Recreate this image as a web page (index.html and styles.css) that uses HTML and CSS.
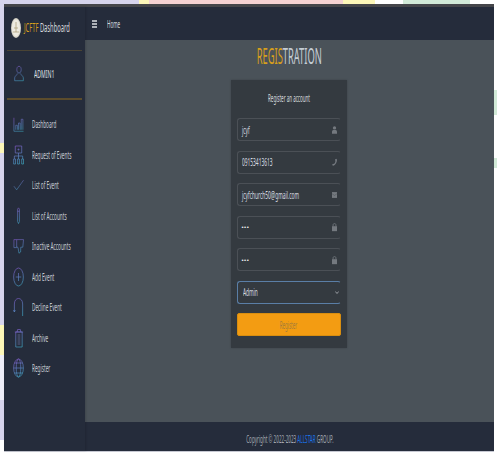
FILE: index.html
```html
<!DOCTYPE html>
<html lang="en">
<head>
<meta charset="utf-8">
<title>JCFTF Dashboard</title>
<link rel="stylesheet" href="styles.css">
</head>
<body>
<svg class="defs" aria-hidden="true"><defs><linearGradient id="g" gradientUnits="userSpaceOnUse" x1="0" y1="0" x2="12" y2="20"><stop offset="0" stop-color="#8a4fc8"/><stop offset="1" stop-color="#35b0c0"/></linearGradient></defs></svg>
<div class="app">
  <div class="strip"></div>
  <div class="frame">
    <aside class="sidebar">
      <div class="brand">
        <svg class="logo" viewBox="0 0 10 20"><ellipse cx="5" cy="10" rx="5" ry="10" fill="#d8d5c8"/><ellipse cx="5" cy="10" rx="4" ry="8.500" fill="#eeebe0"/><path d="M5 4v10M2 14h6M3 10h4" stroke="#a89a70" fill="none" stroke-width=".7"/></svg>
        <span class="brand-text"><span class="gold">JCFTF</span> Dashboard</span>
      </div>
      <hr class="rule">
      <div class="user">
        <svg class="icon user-icon" viewBox="0 0 12 20" preserveAspectRatio="none"><path d="M6 1.500c-2 0-2.600 2-2.600 4s.8 4 2.600 4 2.600-2 2.600-4-.6-4-2.600-4zM4 10c-.3 2-3 3-3.200 5v3.500h10.400V15c-.2-2-2.900-3-3.200-5"/></svg>
        <span class="user-name">ADMIN1</span>
      </div>
      <hr class="rule rule-strong">
      <nav class="menu">
        <a class="item"><svg class="icon icon-15" viewBox="0 0 12 20" preserveAspectRatio="none"><path d="M1 1v18h10.500M3 17v-6h1.800v6M6 17V8h1.800v9M9 17V3h1.800v14"/></svg><span>Dashboard</span></a>
        <a class="item"><svg class="icon" viewBox="0 0 12 20" preserveAspectRatio="none"><path d="M2.500 1h7v7h-7zM6 8v3M1.500 11h9M1.500 11v3M6 11v3M10.500 11v3M.7 14h2v5h-2zM5 14h2v5H5zM9.500 14h2v5h-2z"/><path d="M5.500 4h1v1h-1z"/></svg><span>Request of Events</span></a>
        <a class="item"><svg class="icon icon-12" viewBox="0 0 12 20" preserveAspectRatio="none"><path d="M1 12l3 6L11.500 2"/></svg><span>List of Event</span></a>
        <a class="item"><svg class="icon icon-17" viewBox="0 0 12 20" preserveAspectRatio="none"><path d="M5 2.500l1-1.500 1 1.500V17l-1 2.500L5 17zM5 5h2"/></svg><span>List of Accounts</span></a>
        <a class="item"><svg class="icon icon-16" viewBox="0 0 12 20" preserveAspectRatio="none"><path d="M1 2h3v10H1zM4 2h7.500l-.8 9.500H8.500l-.2 6-1.800 1.500-1-7-1.500-1"/></svg><span>Inactive Accounts</span></a>
        <a class="item"><svg class="icon" viewBox="0 0 12 20" preserveAspectRatio="none"><ellipse cx="6" cy="10" rx="5.300" ry="9"/><path d="M6 6v8M3 10h6"/></svg><span>Add Event</span></a>
        <a class="item"><svg class="icon" viewBox="0 0 12 20" preserveAspectRatio="none"><path d="M1.500 15V7c0-3.500 2-5.500 4.500-5.500S10.500 3.500 10.500 7v12M.5 13l1 2 1-2"/></svg><span>Decline Event</span></a>
        <a class="item"><svg class="icon" viewBox="0 0 12 20" preserveAspectRatio="none"><path d="M3 4h7v15H3zM2 4h9M4.500 4l.5-2.500h3L8.500 4"/><path class="fill" d="M5 6h3v11H5z"/></svg><span>Archive</span></a>
        <a class="item"><svg class="icon" viewBox="0 0 12 20" preserveAspectRatio="none"><ellipse cx="6" cy="10" rx="5.300" ry="9"/><ellipse cx="6" cy="10" rx="2.500" ry="9"/><path d="M.7 10h10.600M1.500 5h9M1.500 15h9"/></svg><span>Register</span></a>
      </nav>
    </aside>
    <div class="content">
      <header class="topbar">
        <span class="burger"><i></i><i></i><i></i></span>
        <span class="crumb">Home</span>
      </header>
      <main class="main">
        <h1 class="title"><span class="gold">REGIS</span>TRATION</h1>
        <form class="card">
          <p class="card-title">Register an account</p>
          <div class="field"><span class="value">jcyf</span>
            <svg class="field-icon" viewBox="0 0 6 9"><circle cx="3" cy="2" r="2"/><path d="M0 9V6.500C0 5 1 4.500 3 4.500S6 5 6 6.500V9z"/></svg></div>
          <div class="field"><span class="value">09153413613</span>
            <svg class="field-icon" viewBox="0 0 6 9"><path d="M5.500.5L6 2C6 5 4 8 1.500 9L0 8l1.200-1.500L2.300 7C3.500 6 4.200 4.300 4 3L3.500 1.500z"/></svg></div>
          <div class="field"><span class="value">jcyfchurch50@gmail.com</span>
            <svg class="field-icon" viewBox="0 0 6 9"><path d="M0 1h6v7H0z"/><path class="cut" d="M0 3l3 2 3-2"/></svg></div>
          <div class="field"><span class="dots">•••</span>
            <svg class="field-icon" viewBox="0 0 6 10"><path class="cut-lock" d="M1.300 4V2.200C1.300.5 4.700.5 4.700 2.200V4"/><path d="M0 4h6v6H0z"/></svg></div>
          <div class="field"><span class="dots">•••</span>
            <svg class="field-icon" viewBox="0 0 6 10"><path class="cut-lock" d="M1.300 4V2.200C1.300.5 4.700.5 4.700 2.200V4"/><path d="M0 4h6v6H0z"/></svg></div>
          <div class="field field-select"><span class="value">Admin</span>
            <svg class="chev" viewBox="0 0 6 4"><path d="M.5 .5L3 3.500 5.500 .5"/></svg></div>
          <button class="submit" type="button"><span class="submit-text">Register</span></button>
        </form>
      </main>
      <footer class="footer"><span class="footer-text">Copyright © 2022-2023 <span class="blue">ALLSTAR</span> GROUP.</span></footer>
    </div>
  </div>
</div>
</body>
</html>
```

FILE: styles.css
```css
* { box-sizing: border-box; }
html, body { height: 100%; }
body {
  margin: 0;
  padding: 4px 3px 4px 4px;
  overflow: hidden;
  font-family: "Noto Sans", "Liberation Sans", sans-serif;
  background-color: #fff;
  background-repeat: no-repeat;
  background-image:
    linear-gradient(90deg, #d6d4ec 0 139px, #fdf7b8 139px 149px, #f5d2d2 149px 343px, #fdf7b8 343px 375px, #fff 375px 403px, #d2ead8 403px 470px, #fff 470px),
    linear-gradient(180deg, #d6d4ec 0 143px, #fdf7b8 143px 153px, #d6d4ec 153px 325px, #fdf7b8 325px 355px, #eeeef8 355px 400px, #d6d4ec 400px 440px, #fff 440px),
    linear-gradient(180deg, #fff 0 90px, #d2ead8 90px 115px, #fff 115px 158px, #d2ead8 158px 168px, #fff 168px),
    linear-gradient(180deg, #c6c8d2 0 1px, #fff 1px);
  background-size: 100% 4px, 4px 100%, 3px 100%, 100% 4px;
  background-position: top left, top left, top right, bottom left;
}
.defs { position: absolute; width: 0; height: 0; }
.app { height: 100%; display: flex; flex-direction: column; }
.strip { height: 3px; background: #45464a; flex: none; }
.frame { flex: 1; display: flex; min-height: 0; background: #252c3b; }
.sidebar { width: 81px; flex: none; background: #252c3b; padding: 0 3px; display: flex; flex-direction: column; z-index: 1; box-shadow: 1px 0 2px rgba(0,0,0,.15); }
.brand { height: 43px; display: flex; align-items: center; gap: 3px; padding: 0 0 2px 4px; color: #d6d8dc; font-size: 12px; white-space: nowrap; }
.brand-text { transform: scaleX(.48); transform-origin: left center; }
.logo { width: 10px; height: 20px; flex: none; }
.gold { color: #d79f1c; }
.rule { border: 0; height: 1px; margin: 0; background: #4a4434; flex: none; }
.rule-strong { height: 2px; background: #5b4c2c; }
.user { height: 47px; display: flex; align-items: center; gap: 10px; padding: 0 0 3px 6px; color: #dfe1e6; font-size: 11px; }
.user-name { transform: scaleX(.47); transform-origin: left center; }
.icon { width: 11px; height: 20px; flex: none; fill: none; stroke: url(#g); stroke-width: .7; }
.icon-15 { height: 15px; }
.icon-12 { height: 12px; }
.icon-17 { height: 17px; }
.icon-16 { height: 16px; }
.user-icon { width: 10px; height: 17px; margin-left: 1px; }
.icon .fill { fill: #3f4660; stroke: none; }
.menu { display: flex; flex-direction: column; padding-top: 9px; }
.item { height: 30.500px; display: flex; align-items: center; gap: 8px; padding-left: 6px; color: #c8ccd4; font-size: 10px; white-space: nowrap; }
.item span { transform: scaleX(.47); transform-origin: left center; }
.content { flex: 1; min-width: 0; display: flex; flex-direction: column; }
.topbar { height: 33px; flex: none; display: flex; align-items: center; gap: 10px; padding-left: 7px; background: #252c3b; color: #d4d8de; font-size: 10px; }
.crumb { transform: scaleX(.46); transform-origin: left center; }
.burger { width: 5px; display: flex; flex-direction: column; gap: 1px; }
.burger i { height: 2px; background: #aeb2b8; display: block; }
.main { flex: 1; min-height: 0; background: #4a5259; display: flex; flex-direction: column; align-items: center; padding-top: 6px; }
.title { margin: 0 0 13px; height: 21px; line-height: 21px; font-weight: 400; font-size: 21px; color: #c4ccd4; white-space: nowrap; transform: scaleX(.445); }
.card { width: 116px; height: 268px; margin-right: 2px; background: #343a40; padding: 12px 6px 0; display: flex; flex-direction: column; box-shadow: 0 0 2px rgba(0,0,0,.2); }
.card-title { margin: 0 0 13px; height: 13px; line-height: 13px; text-align: center; font-size: 10px; color: #d8dade; white-space: nowrap; transform: scaleX(.45); }
.field { height: 23px; margin-bottom: 9.500px; flex: none; display: flex; align-items: center; justify-content: space-between; padding: 0 3px 0 4px; border: 1px solid #4b5056; border-right-color: transparent; border-radius: 3px; font-size: 10px; color: #d8dce2; }
.value { flex: 1; min-width: 0; white-space: nowrap; transform: scaleX(.485); transform-origin: left center; }
.field-icon { width: 5px; height: 10px; fill: #74797f; flex: none; }
.field-icon .cut { fill: none; stroke: #4b5056; stroke-width: .6; }
.field-icon .cut-lock { fill: none; stroke: #74797f; stroke-width: 1; }
.dots { font-size: 6px; letter-spacing: .5px; color: #eceef2; font-family: "Liberation Sans", sans-serif; }
.field-select { border-color: #5a7ea6; border-right-color: transparent; padding: 0 1px 0 5px; }
.chev { width: 4px; height: 3px; fill: none; stroke: #c8ccd2; stroke-width: 1; flex: none; }
.submit { height: 23px; flex: none; border: 1px solid #d98e10; border-radius: 2px; background: #f39c12; color: #a57c3a; font: inherit; font-size: 10px; padding: 0; }
.submit-text { display: inline-block; transform: scaleX(.45); }
.footer { height: 29px; flex: none; background: #252c3b; color: #a4a9b0; font-size: 10px; display: flex; align-items: center; justify-content: center; padding: 5px 0 0; white-space: nowrap; }
.footer-text { transform: scaleX(.46); }
.blue { color: #1a72e8; }
```
